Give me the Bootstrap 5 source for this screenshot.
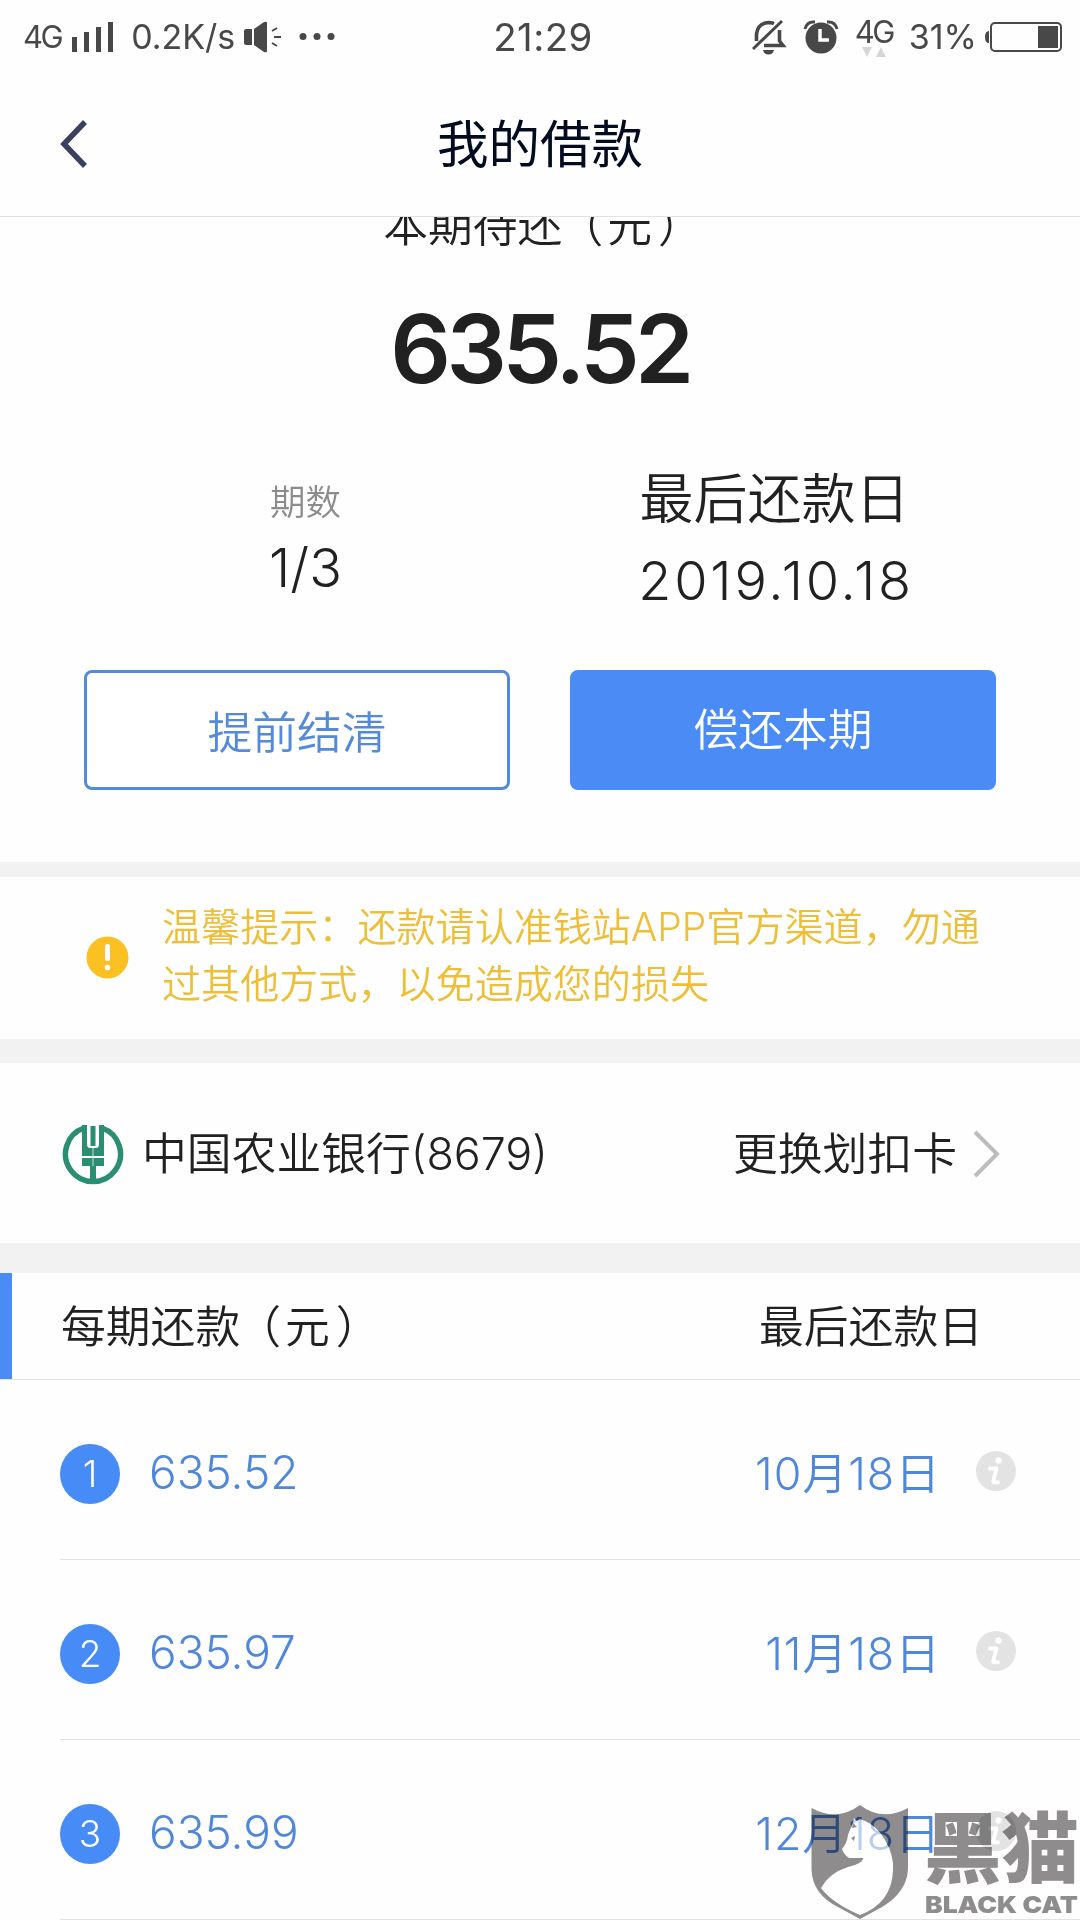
<!doctype html>
<html lang="zh-CN">

<head>
    <meta charset="utf-8">
    <meta name="viewport" content="width=device-width, initial-scale=1">
    <title>我的借款</title>
    <link href="https://cdn.jsdelivr.net/npm/bootstrap@5.3.3/dist/css/bootstrap.min.css" rel="stylesheet">
    <style>
        body {
            width: 1080px;
            height: 1920px;
            overflow: hidden;
            position: relative;
            background: #fefefe;
            color: #212121;
            font-family: Inter, "Noto Sans CJK SC", sans-serif;
            font-size: 44.8px;
            font-weight: 350;
            line-height: 60px;
        }

        svg {
            display: block;
            flex: none;
        }

        /* status bar */
        .status-bar {
            height: 68px;
            padding: 6px 17px 0 23px;
            color: #484848;
            font-weight: 400;
        }

        .status-side {
            width: 420px;
        }

        .net-type {
            font-size: 31px;
            line-height: 30px;
            letter-spacing: -2.5px;
        }

        .net-speed {
            font-size: 34px;
        }

        .clock {
            font-size: 38.5px;
            letter-spacing: .4px;
        }

        /* title bar */
        .title-bar {
            height: 149px;
            border-bottom: 1px solid #dfe2e3;
            padding: 3px 60px 0 60px;
            color: #020b1f;
            font-size: 51.5px;
            font-weight: 400;
        }

        /* full-width brackets sit apart from the text between them */
        .paren-open {
            margin: 0 4px 0 -4px;
        }

        .paren-close {
            margin: 0 -6px 0 6px;
        }

        /* current bill */
        .bill {
            height: 645px;
            overflow: hidden;
        }

        .bill-label {
            margin-top: -21px;
        }

        .bill-amount {
            margin-top: 38px;
            font-size: 95px;
            font-weight: 600;
            line-height: 110px;
            letter-spacing: -4.6px;
        }

        .bill-stats {
            margin-top: 66px;
            padding: 0 71px;
            height: 141px;
            font-size: 54px;
        }

        .stat-name {
            padding-top: 13px;
            margin-bottom: 15px;
            color: #8c8c8c;
            font-size: 35.5px;
            line-height: 40px;
        }

        .stat-date {
            letter-spacing: 2.8px;
            margin-right: -3px;
        }

        .bill-actions {
            margin-top: 59px;
            padding: 0 84px;
            gap: 60px;
        }

        .btn-pay {
            height: 120px;
            border: 3px solid #4a8bf5;
            border-radius: 8px;
            background: #4a8bf5;
            color: #fff;
            font-size: 44.8px;
            font-weight: 350;
            line-height: 60px;
            padding: 0;
        }

        .btn-settle {
            background: #fff;
            border-color: #538ad9;
            color: #538ad9;
            padding-top: 6px;
        }

        .band {
            background: #f2f2f2;
        }

        /* notice */
        .notice {
            height: 162px;
            padding: 0 86px 6px;
            gap: 33px;
            color: #eebf36;
            font-size: 39.1px;
            line-height: 57px;
        }

        .notice-icon {
            margin-top: 4px;
        }

        .bank-row {
            height: 180px;
            padding: 1px 79px 0 62px;
        }

        .bank-name {
            margin-left: 18px;
        }

        /* repayment plan */
        .plan-head {
            height: 107px;
            border-bottom: 1px solid #e0e2e3;
            padding: 2px 97px 0 61px;
            box-shadow: inset 12px 0 #4a8bf5;
        }

        .plan-row {
            height: 180px;
            margin-left: 60px;
            border-bottom: 1px solid #e2e2e2;
            padding: 8px 64px 0 0;
            color: #4f87db;
        }

        .plan-no {
            width: 60px;
            height: 60px;
            background: #478bf6;
            color: #fff;
            font-size: 37px;
        }

        .plan-sum {
            font-size: 46px;
            margin: -4px 0 0 29px;
        }

        .plan-date {
            letter-spacing: 1px;
            margin-right: -1px;
        }

        .plan-icon {
            margin: -5px 0 0 36px;
        }

        /* watermark in the corner, over the last row */
        .watermark {
            position: absolute;
            left: 810px;
            top: 1804px;
        }

        .watermark-ink {
            mix-blend-mode: multiply;
        }
    </style>
</head>

<body>
    <svg width="0" height="0" class="position-absolute">
        <symbol id="info" viewBox="0 0 40 40">
            <circle cx="20" cy="20" r="20" fill="#e3e3e3"/>
            <circle cx="22.5" cy="9.5" r="3.2" fill="#fff"/>
            <path d="M14 17.5h6.5l-3.2 12.3q-.4 1.700 1.500 1.500h3.200" fill="none" stroke="#fff" stroke-width="3.800" stroke-linecap="round" stroke-linejoin="round"/>
        </symbol>
    </svg>

    <div class="status-bar d-flex align-items-center justify-content-between">
        <div class="status-side d-flex align-items-center">
            <span class="net-type">4G</span>
            <svg class="ms-2 me-3" width="46" height="32" viewBox="0 0 46 32" fill="#484848">
                <path d="M3 16h5v15H3zM15 11h5v20h-5zM27 6h5v25h-5zM39 1h5v30h-5z"/>
            </svg>
            <span class="net-speed">0.2K/s</span>
            <svg class="ms-2" width="94" height="32" viewBox="0 0 94 32" fill="#484848">
                <path d="M3 8h6v16H3q-2 0-2-2V10q0-2 2-2zM11 8 21 1q3-1 3 1v28q0 2-3 1L11 24z"/>
                <path d="M29 10l5-3M31 16h7M29 22l5 3" stroke="#484848" stroke-width="2"/>
                <circle cx="60" cy="15.500" r="3.500"/>
                <circle cx="74" cy="15.500" r="3.500"/>
                <circle cx="88" cy="15.500" r="3.500"/>
            </svg>
        </div>
        <span class="clock">21:29</span>
        <div class="status-side d-flex align-items-center justify-content-end">
            <!-- muted bell -->
            <svg width="36" height="36" viewBox="0 0 36 36" fill="none" stroke="#484848">
                <path d="M5.500 22V15Q7 4 17.500 3.500q3 0 5.500 1.200M28.500 11v11l3.500 4.500H13" stroke-width="3.600"/>
                <path d="M2 30 31 2" stroke-width="3"/>
                <path d="M12 31h11q-1 4.500-5.500 4.500T12 31z" fill="#484848" stroke="none"/>
            </svg>
            <!-- alarm -->
            <svg class="ms-3" width="36" height="36" viewBox="0 0 36 36">
                <circle cx="18" cy="19" r="15.500" fill="#484848"/>
                <path d="M2 10Q4 2 12 3M34 10Q32 2 24 3" fill="none" stroke="#484848" stroke-width="3"/>
                <path d="M17 10v11h9" fill="none" stroke="#fff" stroke-width="3.500"/>
            </svg>
            <div class="d-flex flex-column align-items-center ms-3">
                <span class="net-type">4G</span>
                <svg width="24" height="10" viewBox="0 0 24 10" fill="#d6d6d6">
                    <path d="M0 0h10L5 10zM14 10h10L19 0z"/>
                </svg>
            </div>
            <span class="net-speed ms-3">31%</span>
            <svg class="ms-2" width="78" height="32" viewBox="0 0 78 32">
                <path d="M4 10v12Q0 22 0 16t4-6z" fill="#484848"/>
                <rect x="6" y="2" width="70" height="28" rx="4" fill="none" stroke="#484848" stroke-width="2"/>
                <path d="M53 5h20v22H53z" fill="#484848"/>
            </svg>
        </div>
    </div>

    <div class="title-bar d-flex align-items-center justify-content-between">
        <svg width="28" height="48" viewBox="0 0 28 48">
            <path d="M25 2 4 24l21 22" fill="none" stroke="#3b4060" stroke-width="5.500"/>
        </svg>
        <span>我的借款</span>
        <span class="ps-4 pe-1"></span>
    </div>

    <div class="bill">
        <div class="bill-label text-center">本期待还<span class="paren-open">（</span>元<span class="paren-close">）</span></div>
        <div class="bill-amount text-center">635.52</div>
        <div class="bill-stats d-flex text-center">
            <div class="w-50">
                <div class="stat-name">期数</div>
                <div>1/3</div>
            </div>
            <div class="w-50 d-flex flex-column justify-content-between">
                <div>最后还款日</div>
                <div class="stat-date">2019.10.18</div>
            </div>
        </div>
        <div class="bill-actions d-flex">
            <button type="button" class="btn btn-pay btn-settle flex-fill w-50">提前结清</button>
            <button type="button" class="btn btn-pay flex-fill w-50">偿还本期</button>
        </div>
    </div>

    <div class="band" style="height: 15px"></div>

    <div class="notice d-flex align-items-center">
        <svg class="notice-icon" width="43" height="43" viewBox="0 0 43 43">
            <circle cx="21.500" cy="21.500" r="21" fill="#fbc022"/>
            <path d="M21.500 10.500v12" stroke="#fff" stroke-width="5" stroke-linecap="round"/>
            <circle cx="21.500" cy="31.500" r="2.800" fill="#fff"/>
        </svg>
        <div class="text-nowrap">温馨提示：还款请认准钱站APP官方渠道，勿通<br>过其他方式，以免造成您的损失</div>
    </div>

    <div class="band" style="height: 24px"></div>

    <div class="bank-row d-flex align-items-center">
        <svg width="62" height="62" viewBox="0 0 62 62">
            <path d="M22 5a27.500 27.500 0 1 0 18 0" fill="none" stroke="#2a8f72" stroke-width="5.500"/>
            <path d="M20 2h5v19q0 4 3 4h6q3 0 3-4V2h5v31H20zM28.500 3h5v20h-5zM20 35h22v8h-8v16h-6V43h-8z" fill="#2a8f72"/>
            <path d="M31 25v18" stroke="#bfe3d7" stroke-width="1"/>
        </svg>
        <span class="bank-name">中国农业银行(8679)</span>
        <span class="ms-auto">更换划扣卡</span>
        <svg class="ms-3" width="28" height="48" viewBox="0 0 28 48">
            <path d="M2 2l22 22L2 46" fill="none" stroke="#bdbdbd" stroke-width="4"/>
        </svg>
    </div>

    <div class="band" style="height: 30px"></div>

    <div class="plan-head d-flex align-items-center justify-content-between">
        <span class="text-nowrap">每期还款<span class="paren-open">（</span>元<span class="paren-close">）</span></span>
        <span>最后还款日</span>
    </div>
    <div class="plan-row d-flex align-items-center">
        <span class="plan-no rounded-circle text-center">1</span>
        <span class="plan-sum">635.52</span>
        <span class="plan-date ms-auto">10月18日</span>
        <svg class="plan-icon" width="40" height="40"><use href="#info"/></svg>
    </div>
    <div class="plan-row d-flex align-items-center">
        <span class="plan-no rounded-circle text-center">2</span>
        <span class="plan-sum">635.97</span>
        <span class="plan-date ms-auto">11月18日</span>
        <svg class="plan-icon" width="40" height="40"><use href="#info"/></svg>
    </div>
    <div class="plan-row d-flex align-items-center">
        <span class="plan-no rounded-circle text-center">3</span>
        <span class="plan-sum">635.99</span>
        <span class="plan-date ms-auto">12月18日</span>
        <svg class="plan-icon" width="40" height="40"><use href="#info"/></svg>
    </div>

    <!-- cat body, fades the date under it -->
    <svg class="watermark" width="100" height="116" viewBox="0 0 100 116">
        <path d="M44 14l3 3 3-2 5 2q12 5 20 19 9 15 8 30-1 33-33 45Q22 99 11 84q8-15 27-21 14-3 15.500-9H39q-5-3-7-9 5-6 6-14 2-6 4-9z" fill="#fff" fill-opacity=".6"/>
    </svg>
    <svg class="watermark watermark-ink" width="270" height="116" viewBox="0 0 270 116" fill="#8f8d8e">
        <path fill-rule="evenodd" d="M1.500 4q26 14 48.500-3 22 17 48 3v61q-1 23-26 38L50 115 28 103Q2 90 1.500 65zM44 14l3 3 3-2 5 2q12 5 20 19 9 15 8 30-1 33-33 45Q22 99 11 84q8-15 27-21 14-3 15.500-9H39q-5-3-7-9 5-6 6-14 2-6 4-9z"/>
        <path d="M41 34l4-2-1 5zM43 19l4 4-5 1z"/>
        <text x="114" y="73" font-size="77" font-weight="900" textLength="155" lengthAdjust="spacingAndGlyphs">黑猫</text>
        <text x="115" y="109" font-size="23" font-weight="900" textLength="153" lengthAdjust="spacingAndGlyphs">BLACK CAT</text>
    </svg>

    <script src="https://cdn.jsdelivr.net/npm/bootstrap@5.3.3/dist/js/bootstrap.bundle.min.js"></script>
</body>

</html>
